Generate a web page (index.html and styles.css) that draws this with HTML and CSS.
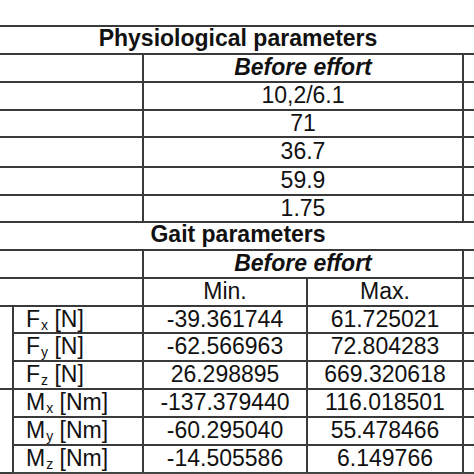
FILE: index.html
```html
<!DOCTYPE html>
<html>
<head>
<meta charset="utf-8">
<link rel="stylesheet" href="styles.css">
</head>
<body>
<table class="data">
  <colgroup>
    <col class="c-a"><col class="c-b"><col class="c-c"><col class="c-d"><col class="c-e">
  </colgroup>
  <tbody>
    <tr class="h28"><th colspan="5" class="section">Physiological parameters</th></tr>
    <tr class="h28"><td colspan="2"></td><td colspan="2" class="phase">Before effort</td><td></td></tr>
    <tr class="h28"><td colspan="2"></td><td colspan="2" class="num">10,2/6.1</td><td></td></tr>
    <tr class="h27"><td colspan="2"></td><td colspan="2" class="num">71</td><td></td></tr>
    <tr class="h30"><td colspan="2"></td><td colspan="2" class="num">36.7</td><td></td></tr>
    <tr class="h28"><td colspan="2"></td><td colspan="2" class="num">59.9</td><td></td></tr>
    <tr class="h27"><td colspan="2"></td><td colspan="2" class="num">1.75</td><td></td></tr>
    <tr class="h28"><th colspan="5" class="section">Gait parameters</th></tr>
    <tr class="h28"><td colspan="2"></td><td colspan="2" class="phase">Before effort</td><td></td></tr>
    <tr class="h28"><td colspan="2"></td><td class="num">Min.</td><td class="num">Max.</td><td></td></tr>
    <tr class="h27"><td rowspan="3"></td><td class="label">F<sub>x</sub> [N]</td><td class="num">-39.361744</td><td class="num">61.725021</td><td></td></tr>
    <tr class="h28"><td class="label">F<sub>y</sub> [N]</td><td class="num">-62.566963</td><td class="num">72.804283</td><td></td></tr>
    <tr class="h28"><td class="label">F<sub>z</sub> [N]</td><td class="num">26.298895</td><td class="num">669.320618</td><td></td></tr>
    <tr class="h28"><td rowspan="3"></td><td class="label">M<sub>x</sub> [Nm]</td><td class="num">-137.379440</td><td class="num">116.018501</td><td></td></tr>
    <tr class="h28"><td class="label">M<sub>y</sub> [Nm]</td><td class="num">-60.295040</td><td class="num">55.478466</td><td></td></tr>
    <tr class="h28 last"><td class="label">M<sub>z</sub> [Nm]</td><td class="num">-14.505586</td><td class="num">6.149766</td><td></td></tr>
  </tbody>
</table>
</body>
</html>
```

FILE: styles.css
```css
html, body {
  margin: 0;
  padding: 0;
  overflow: hidden;
  background: #ffffff;
}

body {
  width: 474px;
  height: 474px;
  font-family: "Liberation Sans", Arial, sans-serif;
  color: #111111;
}

.data {
  border-collapse: collapse;
  table-layout: fixed;
  width: 514px;
  margin-left: -20px;
  margin-top: 25px;
  font-size: 23px;
  line-height: 1;
}

.c-a { width: 32px; }
.c-b { width: 130px; }
.c-c { width: 164px; }
.c-d { width: 156px; }
.c-e { width: 32px; }

.data th,
.data td {
  border: 2px solid #3a3a3a;
  padding: 0 0 1px 0;
  vertical-align: middle;
  white-space: nowrap;
  overflow: hidden;
}

.h27 { height: 27px; }
.h28 { height: 28px; }
.h30 { height: 30px; }

.data .section {
  font-weight: bold;
  text-align: center;
  padding-bottom: 3px;
}

.data .phase {
  font-weight: bold;
  font-style: italic;
  text-align: center;
}

.data .num {
  text-align: center;
}

.data .label {
  text-align: left;
  padding-left: 12px;
}

.label sub {
  font-size: 14px;
  vertical-align: -3px;
  line-height: 0;
  margin-left: 1px;
}

.data .last td {
  border-bottom: 3px solid #444444;
}
```
